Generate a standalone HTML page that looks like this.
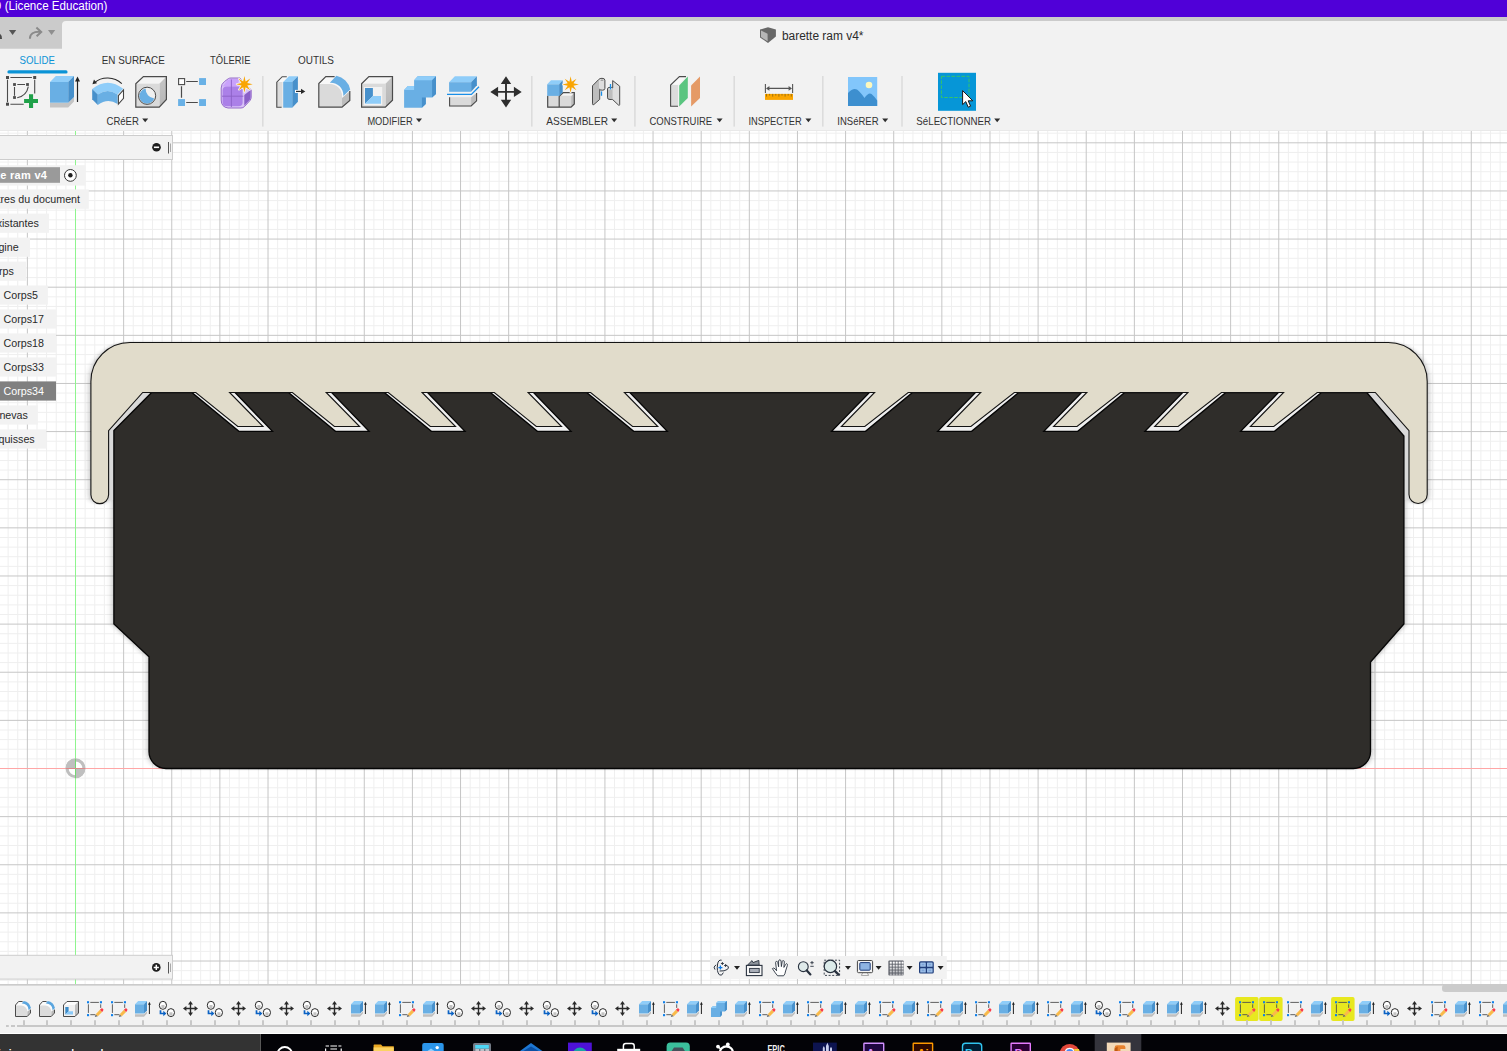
<!DOCTYPE html>
<html lang="fr">
<head>
<meta charset="utf-8">
<title>barette ram v4 - Fusion 360 (Licence Education)</title>
<style>
html,body{margin:0;padding:0;background:#f2f2f2;}
body{width:1507px;height:1051px;overflow:hidden;position:relative;font-family:"Liberation Sans",sans-serif;}
svg{position:absolute;left:0;top:0;display:block;}
text{font-family:"Liberation Sans",sans-serif;font-size:11px;fill:#2e2e2e;}
.lbl{font-size:10.6px;fill:#333;}
.tab{font-size:10.8px;fill:#333;}
.tree{font-size:10.7px;fill:#2a2a2a;}
</style>
</head>
<body>
<svg width="1507" height="1051" viewBox="0 0 1507 1051">
<defs>
<linearGradient id="gside" x1="0" y1="0" x2="0" y2="1"><stop offset="0" stop-color="#c6c6c6"/><stop offset="1" stop-color="#b6b6b6"/></linearGradient>
<!-- timeline icons, 16x16, origin top-left -->
<g id="t-fillet">
<path d="M0.5 15.5 V4 L3.6 0.5 H9 L15.5 7.5 V12 L12.2 15.5 Z" fill="#fbfbfb"/>
<path d="M0.9 15.2 V4.6 H6.4 A6.2 6.2 0 0 1 12.4 10.8 V15.2 Z" fill="#dcdcdc"/>
<path d="M12.4 15.2 V10.6 L15.2 8.6 V11.8 Z" fill="#b9b9b9"/>
<path d="M8.7 -0.1 A9.3 9.3 0 0 1 16 6.9 L13.7 9.2 A6.4 6.4 0 0 0 6.7 2.6 Z" fill="#5ba6df"/>
<path d="M7.6 0.5 H3.6 L0.5 4 V15.5 H12.2 L15.5 12 V8.6" fill="none" stroke="#4b4b4b" stroke-width="1"/>
</g>
<g id="t-shell">
<path d="M0.5 4 L4 0.5 H15.5 L12 4 Z" fill="#fdfdfd"/>
<path d="M12 4 L15.5 0.5 V12 L12 15.5 Z" fill="url(#gside)"/>
<path d="M0.5 4 H12 V15.5 H0.5 Z" fill="#f1f1f1"/>
<path d="M2.3 6 H5.6 V10.4 L2.3 13.6 Z" fill="#3c8cc9"/>
<path d="M5.6 10.2 H10 V13.6 H2.3 L5.6 10.2 Z" fill="#8ccaf8"/>
<path d="M0.5 4 L4 0.5 H15.5 V12 L12 15.5 H0.5 Z" fill="none" stroke="#4b4b4b" stroke-width="1"/>
</g>
<g id="t-sketch">
<path d="M3.3 1.4 H11.9 M1.4 3.3 V11.9 M13.7 3.3 V6.9 M3.3 13.7 H8.2" stroke="#4e4e4e" stroke-width="0.9" fill="none"/>
<rect x="0" y="0.2" width="2.1" height="2.1" fill="#0f80ea"/>
<rect x="12.9" y="0.2" width="2.1" height="2.1" fill="#0f80ea"/>
<rect x="0" y="13.1" width="2.1" height="2.1" fill="#0f80ea"/>
<path d="M7.8 16.1 L8.7 13.2 L10.8 15.3 Z" fill="#6a6a6a"/>
<path d="M8.7 13.2 L12.9 8.8 L15.1 10.9 L10.8 15.3 Z" fill="#f9ba4a"/>
<path d="M12.9 8.8 L13.8 7.9 A1.5 1.5 0 0 1 16 10 L15.1 10.9 Z" fill="#fb3d4a"/>
</g>
<g id="t-extrude">
<path d="M0 13.3 H9 L12 10.3 V12.4 L9 15.7 H0 Z" fill="#c0c0c0"/>
<path d="M0 3.3 L3.2 0 H12 L9 3.3 Z" fill="#8fcdf9"/>
<path d="M9 3.3 L12 0 V9.4 L9 12.5 Z" fill="#4790cb"/>
<rect x="0" y="3.3" width="9.05" height="9.2" fill="#69afe4"/>
<path d="M14.4 2.6 V13" stroke="#222" stroke-width="1"/>
<path d="M14.4 0.7 L13 3.8 H15.8 Z" fill="#222"/>
</g>
<g id="t-copy">
<ellipse cx="3.9" cy="4.3" rx="3.6" ry="4" fill="#fff" stroke="#262626" stroke-width="1"/>
<rect x="2.4" y="4" width="3.1" height="3.3" fill="#c2c2c2"/>
<ellipse cx="11.9" cy="11.6" rx="3.6" ry="4" fill="#fff" stroke="#262626" stroke-width="1"/>
<rect x="10.4" y="11.3" width="3.1" height="3.3" fill="#c2c2c2"/>
<path d="M1.5 9.2 V12.5 H5" fill="none" stroke="#0b62c4" stroke-width="1.7"/>
<path d="M4.3 9.8 L7.4 12.5 L4.3 15.2 Z" fill="#0b62c4"/>
</g>
<g id="t-move">
<path d="M7.5 0 L10 3.4 H8.2 V6.8 H11.6 V5 L15 7.5 L11.6 10 V8.2 H8.2 V11.6 H10 L7.5 15 L5 11.6 H6.8 V8.2 H3.4 V10 L0 7.5 L3.4 5 V6.8 H6.8 V3.4 H5 Z" fill="#2a2a2a"/>
</g>
<g id="t-combine">
<path d="M0 6.9 L1.8 5.2 H5.2 V1.9 L7.2 0 H16 V8.6 L13.8 10.6 H10.9 V14 L9.1 15.9 H0 Z" fill="#69afe4"/>
<path d="M5.2 1.9 L7.2 0 H16 L13.8 1.9 Z M0 6.9 L1.8 5.2 H5.2 V6.9 Z" fill="#8fcdf9"/>
<path d="M13.8 1.9 L16 0 V8.6 L13.8 10.6 Z M9.1 10.6 H10.9 V14 L9.1 15.9 Z" fill="#4790cb"/>
</g>
</defs>

<!-- ======= window chrome ======= -->
<rect x="0" y="0" width="1507" height="17" fill="#5000d8"/>
<rect x="0" y="17" width="1507" height="4" fill="#cbcbcb"/>
<rect x="0" y="21" width="1507" height="110" fill="#f2f2f2"/>
<rect x="0" y="130" width="1507" height="1" fill="#e4e4e4"/>
<path d="M0 17 H1507 V21 H66 A4 4 0 0 0 62 25 V48.7 H0 Z" fill="#cbcbcb"/>
<text x="-5.4" y="9.8" style="font-size:12px;fill:#fff">0</text><text x="4.7" y="9.8" style="font-size:12px;fill:#fff" textLength="102.7" lengthAdjust="spacingAndGlyphs">(Licence Education)</text>

<!-- ======= canvas ======= -->
<rect x="0" y="130.8" width="1507" height="854.2" fill="#fff"/>
<path d="M8.12 131 V984 M17.74 131 V984 M37.00 131 V984 M46.62 131 V984 M56.25 131 V984 M65.87 131 V984 M85.13 131 V984 M94.75 131 V984 M104.38 131 V984 M114.00 131 V984 M133.26 131 V984 M142.88 131 V984 M152.51 131 V984 M162.13 131 V984 M181.39 131 V984 M191.01 131 V984 M200.64 131 V984 M210.26 131 V984 M229.52 131 V984 M239.14 131 V984 M248.77 131 V984 M258.39 131 V984 M277.65 131 V984 M287.27 131 V984 M296.90 131 V984 M306.52 131 V984 M325.78 131 V984 M335.40 131 V984 M345.03 131 V984 M354.65 131 V984 M373.91 131 V984 M383.53 131 V984 M393.16 131 V984 M402.78 131 V984 M422.04 131 V984 M431.66 131 V984 M441.29 131 V984 M450.91 131 V984 M470.17 131 V984 M479.79 131 V984 M489.42 131 V984 M499.04 131 V984 M518.30 131 V984 M527.92 131 V984 M537.55 131 V984 M547.17 131 V984 M566.43 131 V984 M576.05 131 V984 M585.68 131 V984 M595.30 131 V984 M614.56 131 V984 M624.18 131 V984 M633.81 131 V984 M643.43 131 V984 M662.69 131 V984 M672.31 131 V984 M681.94 131 V984 M691.56 131 V984 M710.82 131 V984 M720.44 131 V984 M730.07 131 V984 M739.69 131 V984 M758.95 131 V984 M768.57 131 V984 M778.20 131 V984 M787.82 131 V984 M807.08 131 V984 M816.70 131 V984 M826.33 131 V984 M835.95 131 V984 M855.21 131 V984 M864.83 131 V984 M874.46 131 V984 M884.08 131 V984 M903.34 131 V984 M912.96 131 V984 M922.59 131 V984 M932.21 131 V984 M951.47 131 V984 M961.09 131 V984 M970.72 131 V984 M980.34 131 V984 M999.60 131 V984 M1009.22 131 V984 M1018.85 131 V984 M1028.47 131 V984 M1047.73 131 V984 M1057.35 131 V984 M1066.98 131 V984 M1076.60 131 V984 M1095.86 131 V984 M1105.48 131 V984 M1115.11 131 V984 M1124.73 131 V984 M1143.99 131 V984 M1153.61 131 V984 M1163.24 131 V984 M1172.86 131 V984 M1192.12 131 V984 M1201.74 131 V984 M1211.37 131 V984 M1220.99 131 V984 M1240.25 131 V984 M1249.87 131 V984 M1259.50 131 V984 M1269.12 131 V984 M1288.38 131 V984 M1298.00 131 V984 M1307.63 131 V984 M1317.25 131 V984 M1336.51 131 V984 M1346.13 131 V984 M1355.76 131 V984 M1365.38 131 V984 M1384.64 131 V984 M1394.26 131 V984 M1403.89 131 V984 M1413.51 131 V984 M1432.77 131 V984 M1442.39 131 V984 M1452.02 131 V984 M1461.64 131 V984 M1480.90 131 V984 M1490.52 131 V984 M1500.15 131 V984 M0 133.18 H1507 M0 152.44 H1507 M0 162.06 H1507 M0 171.69 H1507 M0 181.31 H1507 M0 200.57 H1507 M0 210.19 H1507 M0 219.82 H1507 M0 229.44 H1507 M0 248.70 H1507 M0 258.32 H1507 M0 267.95 H1507 M0 277.57 H1507 M0 296.83 H1507 M0 306.45 H1507 M0 316.08 H1507 M0 325.70 H1507 M0 344.96 H1507 M0 354.58 H1507 M0 364.21 H1507 M0 373.83 H1507 M0 393.09 H1507 M0 402.71 H1507 M0 412.34 H1507 M0 421.96 H1507 M0 441.22 H1507 M0 450.84 H1507 M0 460.47 H1507 M0 470.09 H1507 M0 489.35 H1507 M0 498.97 H1507 M0 508.60 H1507 M0 518.22 H1507 M0 537.48 H1507 M0 547.10 H1507 M0 556.73 H1507 M0 566.35 H1507 M0 585.61 H1507 M0 595.23 H1507 M0 604.86 H1507 M0 614.48 H1507 M0 633.74 H1507 M0 643.36 H1507 M0 652.99 H1507 M0 662.61 H1507 M0 681.87 H1507 M0 691.49 H1507 M0 701.12 H1507 M0 710.74 H1507 M0 730.00 H1507 M0 739.62 H1507 M0 749.25 H1507 M0 758.87 H1507 M0 778.13 H1507 M0 787.75 H1507 M0 797.38 H1507 M0 807.00 H1507 M0 826.26 H1507 M0 835.88 H1507 M0 845.51 H1507 M0 855.13 H1507 M0 874.39 H1507 M0 884.01 H1507 M0 893.64 H1507 M0 903.26 H1507 M0 922.52 H1507 M0 932.14 H1507 M0 941.77 H1507 M0 951.39 H1507 M0 970.65 H1507 M0 980.27 H1507" stroke="#efefef" stroke-width="1" fill="none"/>
<path d="M27.37 131 V984 M75.50 131 V984 M123.63 131 V984 M171.76 131 V984 M219.89 131 V984 M268.02 131 V984 M316.15 131 V984 M364.28 131 V984 M412.41 131 V984 M460.54 131 V984 M508.67 131 V984 M556.80 131 V984 M604.93 131 V984 M653.06 131 V984 M701.19 131 V984 M749.32 131 V984 M797.45 131 V984 M845.58 131 V984 M893.71 131 V984 M941.84 131 V984 M989.97 131 V984 M1038.10 131 V984 M1086.23 131 V984 M1134.36 131 V984 M1182.49 131 V984 M1230.62 131 V984 M1278.75 131 V984 M1326.88 131 V984 M1375.01 131 V984 M1423.14 131 V984 M1471.27 131 V984 M0 142.81 H1507 M0 190.94 H1507 M0 239.07 H1507 M0 287.20 H1507 M0 335.33 H1507 M0 383.46 H1507 M0 431.59 H1507 M0 479.72 H1507 M0 527.85 H1507 M0 575.98 H1507 M0 624.11 H1507 M0 672.24 H1507 M0 720.37 H1507 M0 768.50 H1507 M0 816.63 H1507 M0 864.76 H1507 M0 912.89 H1507 M0 961.02 H1507" stroke="#c6c6c6" stroke-width="1" fill="none"/>
<path d="M75.5 131 V985" stroke="#8ef58e" stroke-width="1" fill="none"/>
<path d="M0 768.5 H1507" stroke="#ffa6a6" stroke-width="1" fill="none"/>

<!-- model -->
<g id="model">
<filter id="soft" x="-5%" y="-5%" width="110%" height="110%"><feGaussianBlur stdDeviation="3.8 1.2"/></filter>
<g filter="url(#soft)" opacity="0.5"><path d="M151.7 392.5 L191.8 392.5 L238.9 431.3 L272.5 431.3 L234.9 392.5 L288.4 392.5 L335.5 431.3 L369.1 431.3 L331.5 392.5 L384.3 392.5 L431.4 431.3 L465.0 431.3 L427.4 392.5 L490.3 392.5 L537.4 431.3 L571.0 431.3 L533.4 392.5 L586.6 392.5 L633.7 431.3 L667.3 431.3 L629.7 392.5 L869.5 392.5 L831.6 431.3 L865.5 431.3 L912.6 392.5 L975.6 392.5 L937.7 431.3 L971.6 431.3 L1018.7 392.5 L1081.7 392.5 L1043.8 431.3 L1077.7 431.3 L1124.8 392.5 L1182.8 392.5 L1144.9 431.3 L1178.8 431.3 L1225.9 392.5 L1278.5 392.5 L1240.6 431.3 L1274.5 431.3 L1321.6 392.5 L1366.7 392.5 L1403.9 436 V624 L1370.5 662 V751.5 A17 17 0 0 1 1353.5 768.5 H166.0 A17 17 0 0 1 149 751.5 V656.7 L113.9 624 V430.6 Z" fill="#333"/><path d="M129.9 342.5 H1388.2 A39.0 39.0 0 0 1 1427.2 381.5 V494.5 A9.10 9.10 0 0 1 1409.0 494.5 V430.7 L1375.3 392.5 L1317.2 392.5 L1273.8 426.5 L1250.4 426.5 L1283.6 392.5 L1221.5 392.5 L1178.1 426.5 L1154.7 426.5 L1187.9 392.5 L1120.4 392.5 L1077.0 426.5 L1053.6 426.5 L1086.8 392.5 L1014.3 392.5 L970.9 426.5 L947.5 426.5 L980.7 392.5 L908.2 392.5 L864.8 426.5 L841.4 426.5 L874.6 392.5 L624.4 392.5 L657.8 426.5 L632.6 426.5 L590.6 392.5 L528.1 392.5 L561.5 426.5 L536.3 426.5 L494.3 392.5 L422.1 392.5 L455.5 426.5 L430.3 426.5 L388.3 392.5 L326.2 392.5 L359.6 426.5 L334.4 426.5 L292.4 392.5 L229.6 392.5 L263.0 426.5 L237.8 426.5 L195.8 392.5 L142.7 392.5 L108.6 430.7 V494.8 A8.85 8.85 0 0 1 90.9 494.8 V381.5 A39.0 39.0 0 0 1 129.9 342.5 Z" fill="#333"/></g>
<path d="M108.5 430.7 L142.7 392.2 H152 L113.9 430.6 V500 H108.5 Z" fill="#d9d9d9"/>
<path d="M191.8 392.5 L238.9 431.3 L272.5 431.3 L234.9 392.5 Z M288.4 392.5 L335.5 431.3 L369.1 431.3 L331.5 392.5 Z M384.3 392.5 L431.4 431.3 L465.0 431.3 L427.4 392.5 Z M490.3 392.5 L537.4 431.3 L571.0 431.3 L533.4 392.5 Z M586.6 392.5 L633.7 431.3 L667.3 431.3 L629.7 392.5 Z M869.5 392.5 L831.6 431.3 L865.5 431.3 L912.6 392.5 Z M975.6 392.5 L937.7 431.3 L971.6 431.3 L1018.7 392.5 Z M1081.7 392.5 L1043.8 431.3 L1077.7 431.3 L1124.8 392.5 Z M1182.8 392.5 L1144.9 431.3 L1178.8 431.3 L1225.9 392.5 Z M1278.5 392.5 L1240.6 431.3 L1274.5 431.3 L1321.6 392.5 Z" fill="#efefef"/>
<path d="M1409.3 430.7 L1375.3 392.2 H1366.7 L1404.2 436 V500 H1409.3 Z" fill="#d9d9d9"/>
<path d="M151.7 392.5 L191.8 392.5 L238.9 431.3 L272.5 431.3 L234.9 392.5 L288.4 392.5 L335.5 431.3 L369.1 431.3 L331.5 392.5 L384.3 392.5 L431.4 431.3 L465.0 431.3 L427.4 392.5 L490.3 392.5 L537.4 431.3 L571.0 431.3 L533.4 392.5 L586.6 392.5 L633.7 431.3 L667.3 431.3 L629.7 392.5 L869.5 392.5 L831.6 431.3 L865.5 431.3 L912.6 392.5 L975.6 392.5 L937.7 431.3 L971.6 431.3 L1018.7 392.5 L1081.7 392.5 L1043.8 431.3 L1077.7 431.3 L1124.8 392.5 L1182.8 392.5 L1144.9 431.3 L1178.8 431.3 L1225.9 392.5 L1278.5 392.5 L1240.6 431.3 L1274.5 431.3 L1321.6 392.5 L1366.7 392.5 L1403.9 436 V624 L1370.5 662 V751.5 A17 17 0 0 1 1353.5 768.5 H166.0 A17 17 0 0 1 149 751.5 V656.7 L113.9 624 V430.6 Z" fill="#2f2d2a" stroke="#050505" stroke-width="1.3"/>
<path d="M129.9 342.5 H1388.2 A39.0 39.0 0 0 1 1427.2 381.5 V494.5 A9.10 9.10 0 0 1 1409.0 494.5 V430.7 L1375.3 392.5 L1317.2 392.5 L1273.8 426.5 L1250.4 426.5 L1283.6 392.5 L1221.5 392.5 L1178.1 426.5 L1154.7 426.5 L1187.9 392.5 L1120.4 392.5 L1077.0 426.5 L1053.6 426.5 L1086.8 392.5 L1014.3 392.5 L970.9 426.5 L947.5 426.5 L980.7 392.5 L908.2 392.5 L864.8 426.5 L841.4 426.5 L874.6 392.5 L624.4 392.5 L657.8 426.5 L632.6 426.5 L590.6 392.5 L528.1 392.5 L561.5 426.5 L536.3 426.5 L494.3 392.5 L422.1 392.5 L455.5 426.5 L430.3 426.5 L388.3 392.5 L326.2 392.5 L359.6 426.5 L334.4 426.5 L292.4 392.5 L229.6 392.5 L263.0 426.5 L237.8 426.5 L195.8 392.5 L142.7 392.5 L108.6 430.7 V494.8 A8.85 8.85 0 0 1 90.9 494.8 V381.5 A39.0 39.0 0 0 1 129.9 342.5 Z" fill="#e1dccb" stroke="#141414" stroke-width="1.1"/>
</g>

<!-- origin -->
<g>
<circle cx="75.5" cy="768.3" r="8.4" fill="none" stroke="#bfbfbf" stroke-width="3.1"/>
<path d="M75.5 768.5 V758.7 A9.8 9.8 0 0 0 65.7 768.5 Z M75.5 768.5 V778.3 A9.8 9.8 0 0 0 85.3 768.5 Z" fill="#bfbfbf"/>
<path d="M75.5 758.7 V778.3" stroke="#72d672" stroke-width="1"/>
<path d="M65.7 768.5 H85.3" stroke="#d98a8a" stroke-width="1"/>
</g>

<!-- ======= browser panel ======= -->
<g id="browser">
<rect x="-1" y="135.5" width="173.5" height="24" fill="#f2f2f2" stroke="#cdcdcd" stroke-width="1"/>
<circle cx="156.5" cy="147.3" r="4.3" fill="#1e1e1e"/><rect x="153.9" y="146.5" width="5.2" height="1.6" fill="#fff"/>
<path d="M168.5 142 V153.5" stroke="#555" stroke-width="1"/><path d="M170.5 143.5 V152" stroke="#aaa" stroke-width="1"/>
<rect x="0" y="165.2" width="85.6" height="20.4" fill="#f2f2f2"/>
<rect x="0" y="167.2" width="60" height="15.6" fill="#9a9a9a"/>
<text x="-32.2" y="179.2" style="font-size:11px;font-weight:bold;fill:#fff" textLength="79.2" lengthAdjust="spacing">barette ram v4</text>
<circle cx="70.4" cy="175.4" r="5.9" fill="#fff" stroke="#2a2a2a" stroke-width="0.95"/><circle cx="70.4" cy="175.3" r="2.2" fill="#1e1e1e"/>
<rect x="0" y="189.4" width="88.8" height="19.4" fill="#f2f2f2"/>
<text class="tree" x="80.0" y="203.1" text-anchor="end" style="fill:#2a2a2a">Paramètres du document</text>
<rect x="0" y="213.6" width="49.0" height="19.2" fill="#f2f2f2"/>
<text class="tree" x="38.8" y="227.0" text-anchor="end" style="fill:#2a2a2a">Vues existantes</text>
<rect x="0" y="237.6" width="30.0" height="19.2" fill="#f2f2f2"/>
<text class="tree" x="18.6" y="251.0" text-anchor="end" style="fill:#2a2a2a">Origine</text>
<rect x="0" y="261.6" width="26.0" height="19.2" fill="#f2f2f2"/>
<text class="tree" x="13.9" y="275.0" text-anchor="end" style="fill:#2a2a2a">Corps</text>
<rect x="0" y="285.5" width="47.9" height="19.2" fill="#f2f2f2"/>
<text class="tree" x="3.6" y="298.9" style="fill:#2a2a2a">Corps5</text>
<rect x="0" y="309.4" width="56.0" height="19.2" fill="#f2f2f2"/>
<text class="tree" x="3.6" y="322.8" style="fill:#2a2a2a">Corps17</text>
<rect x="0" y="333.4" width="56.0" height="19.2" fill="#f2f2f2"/>
<text class="tree" x="3.6" y="346.8" style="fill:#2a2a2a">Corps18</text>
<rect x="0" y="357.4" width="56.0" height="19.2" fill="#f2f2f2"/>
<text class="tree" x="3.6" y="370.8" style="fill:#2a2a2a">Corps33</text>
<rect x="0" y="381.4" width="56.0" height="19.2" fill="#808080"/>
<text class="tree" x="3.6" y="394.8" style="fill:#fff">Corps34</text>
<rect x="0" y="405.4" width="37.9" height="19.2" fill="#f2f2f2"/>
<text class="tree" x="27.9" y="418.8" text-anchor="end" style="fill:#2a2a2a">Canevas</text>
<rect x="0" y="429.4" width="46.4" height="19.2" fill="#f2f2f2"/>
<text class="tree" x="34.7" y="442.8" text-anchor="end" style="fill:#2a2a2a">Esquisses</text>
<rect x="-1" y="955.3" width="173.5" height="23.8" fill="#f2f2f2" stroke="#cdcdcd" stroke-width="1"/>
<circle cx="156.3" cy="967.4" r="4.3" fill="#1e1e1e"/><path d="M153.7 967.4 H158.9 M156.3 964.8 V970" stroke="#fff" stroke-width="1.5"/>
<path d="M168.5 962 V973.5" stroke="#555" stroke-width="1"/><path d="M170.5 963.5 V972" stroke="#aaa" stroke-width="1"/>
</g>

<!-- ======= nav bar ======= -->
<g id="navbar">
<rect x="710.2" y="956" width="236.6" height="23" fill="#f2f2f2"/>
<g fill="none" stroke="#2a3340" stroke-width="1">
<path d="M716 964.8 Q712.6 967 715 969.6 M726 965.2 Q730 966.6 727.4 969.4 Q724.6 971.4 719.6 971"/>
<path d="M721.6 960.2 Q718.4 959.4 717.6 964 Q716.4 971.6 719.4 974.8 Q721.6 976.6 723.4 972.6"/>
<path d="M722.4 962 v3 m-1.5 -1.5 h3 M725.6 964 v3 m-1.5 -1.5 h3" stroke-width="0.9"/>
</g>
<path d="M720.4 965.6 v4 m-2 -2 h4" stroke="#0a78e6" stroke-width="1.3" fill="none"/>
<path d="M734.0 966 h6 l-3 3.7 Z" fill="#222"/>
<path d="M747.4 965.2 L752 960.6 L753 962.6 L758.8 960.4 L759.2 965.2 Z" fill="#8e949c" stroke="#2a3340" stroke-width="0.9"/>
<rect x="746.4" y="965.4" width="15.6" height="10.2" fill="#f6f6f6" stroke="#2a3340" stroke-width="1.1"/>
<rect x="749.6" y="968.4" width="9.6" height="4.2" fill="#a9aeb8" stroke="#2a3340" stroke-width="0.9"/>
<path d="M772.4 968.6 Q773.6 967.4 775 968.8 L776.6 970.8 L775.6 962.6 Q775.6 961.4 776.6 961.4 Q777.6 961.4 777.8 962.6 L778.6 966.8 L778.6 961 Q778.8 959.8 779.8 959.8 Q780.8 959.8 781 961 L781.4 966.6 L782.2 961.6 Q782.4 960.4 783.4 960.6 Q784.4 960.8 784.3 962 L783.9 967.4 L785.6 964.4 Q786.2 963.4 787 963.8 Q787.8 964.4 787.4 965.4 L785.6 971 Q785.2 974.2 783.6 975.8 H777.6 Q775.6 973.6 772.4 968.6 Z" fill="#fff" stroke="#2a3340" stroke-width="0.9"/>
<circle cx="803.3" cy="966.7" r="4.9" fill="#dfeaea" stroke="#2a3340" stroke-width="1.1"/>
<path d="M806.8 970.4 L810.4 974.4" stroke="#2a3340" stroke-width="2.2" stroke-linecap="round"/>
<path d="M812 961 v3.4 m-1.7 -1.7 h3.4 M810.3 966.3 h3.4" stroke="#2a3340" stroke-width="0.9" fill="none"/>
<rect x="824.2" y="960.2" width="15.4" height="15.2" fill="none" stroke="#2a3340" stroke-width="0.9" stroke-dasharray="2 1.6"/>
<circle cx="830.4" cy="966.4" r="6.2" fill="#dcebea" stroke="#2a3340" stroke-width="1.2"/>
<path d="M835 971.2 L838.6 974.6" stroke="#2a3340" stroke-width="2.4" stroke-linecap="round"/>
<path d="M845.0 966 h6 l-3 3.7 Z" fill="#222"/>
<rect x="857.4" y="960.5" width="15.2" height="12.2" rx="1.2" fill="#f4f4f4" stroke="#444" stroke-width="1"/>
<rect x="859.8" y="962.6" width="10.4" height="7.6" rx="0.8" fill="#8eb4e3" stroke="#1f3d7a" stroke-width="1"/>
<path d="M862.6 973 H867.4 L868.6 975.4 H861.4 Z" fill="#fff" stroke="#666" stroke-width="0.6"/>
<path d="M875.6 966 h6 l-3 3.7 Z" fill="#222"/>
<rect x="888.4" y="960.4" width="15.4" height="15.2" rx="1" fill="#5a5d66"/>
<rect x="889.7" y="961.6" width="2.1" height="2.1" fill="#fff" opacity="1.00"/>
<rect x="889.7" y="964.6" width="2.1" height="2.1" fill="#fff" opacity="0.88"/>
<rect x="889.7" y="967.5" width="2.1" height="2.1" fill="#fff" opacity="0.76"/>
<rect x="889.7" y="970.4" width="2.1" height="2.1" fill="#fff" opacity="0.64"/>
<rect x="889.7" y="973.4" width="2.1" height="2.1" fill="#fff" opacity="0.52"/>
<rect x="892.7" y="961.6" width="2.1" height="2.1" fill="#fff" opacity="1.00"/>
<rect x="892.7" y="964.6" width="2.1" height="2.1" fill="#fff" opacity="0.88"/>
<rect x="892.7" y="967.5" width="2.1" height="2.1" fill="#fff" opacity="0.76"/>
<rect x="892.7" y="970.4" width="2.1" height="2.1" fill="#fff" opacity="0.64"/>
<rect x="892.7" y="973.4" width="2.1" height="2.1" fill="#fff" opacity="0.52"/>
<rect x="895.6" y="961.6" width="2.1" height="2.1" fill="#fff" opacity="1.00"/>
<rect x="895.6" y="964.6" width="2.1" height="2.1" fill="#fff" opacity="0.88"/>
<rect x="895.6" y="967.5" width="2.1" height="2.1" fill="#fff" opacity="0.76"/>
<rect x="895.6" y="970.4" width="2.1" height="2.1" fill="#fff" opacity="0.64"/>
<rect x="895.6" y="973.4" width="2.1" height="2.1" fill="#fff" opacity="0.52"/>
<rect x="898.6" y="961.6" width="2.1" height="2.1" fill="#fff" opacity="1.00"/>
<rect x="898.6" y="964.6" width="2.1" height="2.1" fill="#fff" opacity="0.88"/>
<rect x="898.6" y="967.5" width="2.1" height="2.1" fill="#fff" opacity="0.76"/>
<rect x="898.6" y="970.4" width="2.1" height="2.1" fill="#fff" opacity="0.64"/>
<rect x="898.6" y="973.4" width="2.1" height="2.1" fill="#fff" opacity="0.52"/>
<rect x="901.5" y="961.6" width="2.1" height="2.1" fill="#fff" opacity="1.00"/>
<rect x="901.5" y="964.6" width="2.1" height="2.1" fill="#fff" opacity="0.88"/>
<rect x="901.5" y="967.5" width="2.1" height="2.1" fill="#fff" opacity="0.76"/>
<rect x="901.5" y="970.4" width="2.1" height="2.1" fill="#fff" opacity="0.64"/>
<rect x="901.5" y="973.4" width="2.1" height="2.1" fill="#fff" opacity="0.52"/>
<path d="M906.6 966 h6 l-3 3.7 Z" fill="#222"/>
<rect x="919" y="961.2" width="14.8" height="12.4" rx="1.6" fill="#1f3d7a"/>
<rect x="920.2" y="962.4" width="5.6" height="4.4" rx="0.6" fill="#9dbfe8"/>
<rect x="921.7" y="963.8" width="2.6" height="1.6" fill="#7fa5d8"/>
<rect x="927.0" y="962.4" width="5.6" height="4.4" rx="0.6" fill="#9dbfe8"/>
<rect x="928.5" y="963.8" width="2.6" height="1.6" fill="#7fa5d8"/>
<rect x="920.2" y="968.2" width="5.6" height="4.4" rx="0.6" fill="#9dbfe8"/>
<rect x="921.7" y="969.6" width="2.6" height="1.6" fill="#7fa5d8"/>
<rect x="927.0" y="968.2" width="5.6" height="4.4" rx="0.6" fill="#9dbfe8"/>
<rect x="928.5" y="969.6" width="2.6" height="1.6" fill="#7fa5d8"/>
<path d="M937.6 966 h6 l-3 3.7 Z" fill="#222"/>
</g>

<!-- ======= toolbar ======= -->
<g id="toolbar">
<path d="M-1 39 V33.2 Q2 34.2 2 39 Z" fill="#4a4a4a"/>
<path d="M9 29.9 H16.2 L12.6 35 Z" fill="#555"/>
<path d="M29.9 38.8 C30 33.6 33.5 31.6 40 31.9" fill="none" stroke="#8a8a8a" stroke-width="2"/>
<path d="M36.4 27.6 L41.2 32 L36.6 36.2" fill="none" stroke="#8a8a8a" stroke-width="2"/>
<path d="M48 29.9 H55.2 L51.6 35 Z" fill="#8f8f8f"/>
<g><path d="M768 27.2 L775.9 29.6 V36.6 L768 42.9 L760 37.5 V29.6 Z" fill="#686868"/><path d="M761 30.5 L767.6 33.7 V41.3 L761 37 Z" fill="#b6b6b6"/></g>
<text x="781.9" y="39.7" style="font-size:12px;fill:#2b2b2b" textLength="81.6" lengthAdjust="spacingAndGlyphs">barette ram v4*</text>
<text class="tab" x="19.5" y="64" style="fill:#0a93d6" textLength="35.4" lengthAdjust="spacingAndGlyphs">SOLIDE</text>
<text class="tab" x="101.8" y="64" textLength="63" lengthAdjust="spacingAndGlyphs">EN SURFACE</text>
<text class="tab" x="210.1" y="64" textLength="40.4" lengthAdjust="spacingAndGlyphs">TÔLERIE</text>
<text class="tab" x="298.1" y="64" textLength="35.9" lengthAdjust="spacingAndGlyphs">OUTILS</text>
<rect x="7.4" y="70.3" width="60.2" height="3.2" rx="1.6" fill="#0a93d6"/>
<rect x="262.0" y="76" width="1.6" height="50.6" fill="#dcdcdc"/>
<rect x="531.0" y="76" width="1.6" height="50.6" fill="#dcdcdc"/>
<rect x="634.1" y="76" width="1.6" height="50.6" fill="#dcdcdc"/>
<rect x="733.4" y="76" width="1.6" height="50.6" fill="#dcdcdc"/>
<rect x="822.0" y="76" width="1.6" height="50.6" fill="#dcdcdc"/>
<rect x="901.2" y="76" width="1.6" height="50.6" fill="#dcdcdc"/>
<text class="lbl" x="106.5" y="124.6" textLength="32.4" lengthAdjust="spacingAndGlyphs">CRéER</text>
<path d="M142.2 118.4 h6 l-3 3.9 Z" fill="#2e2e2e"/>
<text class="lbl" x="367.4" y="124.6" textLength="45.3" lengthAdjust="spacingAndGlyphs">MODIFIER</text>
<path d="M416.0 118.4 h6 l-3 3.9 Z" fill="#2e2e2e"/>
<text class="lbl" x="546.3" y="124.6" textLength="61.7" lengthAdjust="spacingAndGlyphs">ASSEMBLER</text>
<path d="M611.2 118.4 h6 l-3 3.9 Z" fill="#2e2e2e"/>
<text class="lbl" x="649.5" y="124.6" textLength="62.7" lengthAdjust="spacingAndGlyphs">CONSTRUIRE</text>
<path d="M716.6 118.4 h6 l-3 3.9 Z" fill="#2e2e2e"/>
<text class="lbl" x="748.4" y="124.6" textLength="53.3" lengthAdjust="spacingAndGlyphs">INSPECTER</text>
<path d="M805.4 118.4 h6 l-3 3.9 Z" fill="#2e2e2e"/>
<text class="lbl" x="837.3" y="124.6" textLength="41.3" lengthAdjust="spacingAndGlyphs">INSéRER</text>
<path d="M882.2 118.4 h6 l-3 3.9 Z" fill="#2e2e2e"/>
<text class="lbl" x="916.3" y="124.6" textLength="74.7" lengthAdjust="spacingAndGlyphs">SéLECTIONNER</text>
<path d="M994.2 118.4 h6 l-3 3.9 Z" fill="#2e2e2e"/>
<g id="i-sketch">
<path d="M10.4 77.5 H31.9 M7.5 79.8 V102.3 M34.7 79.8 V93.6 M10.4 104.2 H23.7" stroke="#4b4b4b" stroke-width="1.1" fill="none"/>
<rect x="6.0" y="76.0" width="3" height="3" fill="#4b4b4b"/>
<rect x="33.2" y="76.0" width="3" height="3" fill="#4b4b4b"/>
<rect x="6.0" y="102.7" width="3" height="3" fill="#4b4b4b"/>
<path d="M17.3 84.5 H25 M14.5 86.9 V95.8" stroke="#4b4b4b" stroke-width="1.1" fill="none"/>
<path d="M17.2 97.7 C23 96.6 27.2 92.6 28.3 86.6" stroke="#4b4b4b" stroke-width="1.1" fill="none"/>
<rect x="13.1" y="83.1" width="2.8" height="2.8" fill="#4b4b4b"/>
<rect x="26.1" y="83.1" width="2.8" height="2.8" fill="#4b4b4b"/>
<rect x="13.1" y="96.1" width="2.8" height="2.8" fill="#4b4b4b"/>
<path d="M29 94.2 H33.1 V99 H38 V103.1 H33.1 V107.9 H29 V103.1 H24.1 V99 H29 Z" fill="#1fa149"/>
</g>
<g id="i-extrude">
<path d="M50 102.7 H68.2 L74 97 V101.6 L68.2 107.6 H50 Z" fill="#c4c4c4"/>
<path d="M50 82 L55.8 76 H74 L68.2 82 Z" fill="#8fcdf9"/>
<path d="M68.2 82 L74 76 V97 L68.2 102.7 Z" fill="#4790cb"/>
<rect x="50" y="82" width="18.2" height="20.7" fill="#69afe4"/>
<path d="M77.5 80 V102" stroke="#222" stroke-width="1.2"/><path d="M77.5 76.6 L75 81.4 H80 Z" fill="#222"/>
</g>
<g id="i-revolve">
<path d="M121.8 83.6 C114 76.4 102 76.2 94.6 82.6" stroke="#2a2a2a" stroke-width="1.1" fill="none"/>
<path d="M92.4 84.2 L94 79.6 L97 83.2 Z" fill="#2a2a2a"/>
<path d="M92.2 89.1 Q107.7 76.6 123.2 88.8 L117.6 94.5 Q107.7 87.4 97.8 94.5 Z" fill="#8fcdf9"/>
<path d="M92.2 89.1 L97.8 94.5 V105 L92.2 99.3 Z" fill="#4790cb"/>
<path d="M97.8 94.5 Q107.7 87.4 117.6 94.5 V104 Q107.7 97.6 97.8 105 Z" fill="#69afe4"/>
<path d="M118.4 95.6 L123.5 90 V98.4 L118.4 104 Z" fill="#fff" stroke="#444" stroke-width="1.1"/>
</g>
<g id="i-hole">
<path d="M135.5 83.7 L143.2 76.3 H166.7 L159.4 83.7 Z" fill="#f4f4f4"/>
<path d="M159.4 83.7 L166.7 76.3 V99.6 L159.4 107.5 Z" fill="url(#gside)"/>
<rect x="135.5" y="83.7" width="23.9" height="23.8" fill="#dadada"/>
<circle cx="147.1" cy="95.8" r="8.6" fill="#f0f0f0"/>
<path d="M145.6 88.6 A7.6 7.6 0 1 0 154.2 98.4 A9.5 9.5 0 0 1 145.6 88.6 Z" fill="#69afe4"/>
<circle cx="147.1" cy="95.8" r="8.6" fill="none" stroke="#4b4b4b" stroke-width="1"/>
<path d="M135.8 83.7 L143.4 76.6 H166.4 V99.5 L159.2 107.2 H135.8 Z" fill="none" stroke="#4b4b4b" stroke-width="1.2"/>
</g>
<g id="i-pattern">
<rect x="178.6" y="78.6" width="6" height="6" fill="#fff" stroke="#4b4b4b" stroke-width="1.1"/>
<rect x="199.1" y="78.1" width="6.9" height="6.9" fill="#69b1e6"/>
<rect x="178.1" y="99.1" width="6.9" height="6.9" fill="#69b1e6"/>
<rect x="199.1" y="99.1" width="6.9" height="6.9" fill="#69b1e6"/>
<path d="M186.2 81.5 H197.8 M181.5 86.2 V97.8 M186.2 102.5 H197.8" stroke="#4b4b4b" stroke-width="1.2"/>
</g>
<g id="i-form">
<path d="M221.2 88 Q221.2 84 224.5 81.5 L228.5 78.5 Q229.5 78 231 78 H240 L251.2 90 V97 Q251.2 99 250 100.5 L244.5 106.5 Q243 108 241 108 H228 Q221.2 107 221.2 100 Z" fill="#d9c3f7" stroke="#8c5fc4" stroke-width="0.9"/>
<path d="M222.5 86.5 L227.5 80 Q229 79 231 79 H239.5 L236.5 86.5 Z" fill="#c9a2fb"/>
<path d="M244.3 95 L250.6 90 V97 Q250.6 99 249.6 100 L244.3 105.8 Z" fill="#8a5fc8"/>
<rect x="222.6" y="86.6" width="20" height="19.6" rx="4" fill="#ab80e8"/>
<path d="M231.4 79.5 V107 M222 96.2 H243.4" stroke="#8c62c6" stroke-width="0.9" fill="none"/>
<path d="M244.40 76.00 L245.59 81.44 L250.27 78.43 L247.26 83.11 L252.70 84.30 L247.26 85.49 L250.27 90.17 L245.59 87.16 L244.40 92.60 L243.21 87.16 L238.53 90.17 L241.54 85.49 L236.10 84.30 L241.54 83.11 L238.53 78.43 L243.21 81.44 Z" fill="#f2f2f2" stroke="#f2f2f2" stroke-width="1.6"/>
<path d="M244.40 76.00 L245.59 81.44 L250.27 78.43 L247.26 83.11 L252.70 84.30 L247.26 85.49 L250.27 90.17 L245.59 87.16 L244.40 92.60 L243.21 87.16 L238.53 90.17 L241.54 85.49 L236.10 84.30 L241.54 83.11 L238.53 78.43 L243.21 81.44 Z" fill="#f9a502"/>
</g>
<g id="i-presspull">
<path d="M276.4 82 L282 76.3 H290 L284 82 Z" fill="#f8f8f8"/>
<rect x="276.4" y="82" width="6" height="25.5" fill="#dcdcdc"/>
<path d="M281.6 107.2 H276.8 V82.2 L282.2 76.7 H286.8" fill="none" stroke="#4b4b4b" stroke-width="1.1"/>
<path d="M283.2 82 L288.9 76.3 H297.9 L292.2 82 Z" fill="#8fcdf9"/>
<path d="M292.2 82 L297.9 76.3 V101.7 L292.2 107.7 Z" fill="#4790cb"/>
<rect x="283.2" y="82" width="9" height="25.7" fill="#69afe4"/>
<rect x="295" y="89.9" width="7" height="3" fill="#fff"/>
<path d="M296 91.4 H302" stroke="#2a2a2a" stroke-width="1.2"/><path d="M301 88.7 L305.3 91.4 L301 94.1 Z" fill="#2a2a2a"/>
</g>
<g id="i-fillet">
<path d="M318.5 83.4 L325.6 76.3 H334.6 L350 89.4 V100.5 L342 107.5 H318.5 Z" fill="#f8f8f8"/>
<path d="M318.9 107.3 V83.9 H330 A12 12 0 0 1 342 96 V107.3 Z" fill="#dadada"/>
<path d="M342 98 L350 91 V100.5 L342 107.5 Z" fill="#bdbdbd"/>
<path d="M336.4 75.8 A17.5 17.5 0 0 1 350.2 89.6 L343.4 96 A12.6 12.6 0 0 0 329.8 82.7 Z" fill="#69afe4"/>
<path d="M334.6 76.6 H325.8 L318.8 83.6 V107.2 H342 L349.8 100.4 V91" fill="none" stroke="#4b4b4b" stroke-width="1.2"/>
</g>
<g id="i-shell">
<path d="M361.3 83.7 L368.7 76.3 H392.8 L385.5 83.7 Z" fill="#f5f5f5"/>
<path d="M385.5 83.7 L392.8 76.3 V100.5 L385.5 107.5 Z" fill="url(#gside)"/>
<rect x="361.3" y="83.7" width="24.2" height="23.8" fill="#dadada"/>
<rect x="364" y="87" width="18.2" height="18.2" fill="#f2f2f2"/>
<path d="M365 88 H372.9 V96 L365 103.7 Z" fill="#4790cb"/>
<path d="M365 103.7 L372.9 96 H381 V103.7 Z" fill="#8fcdf9"/>
<path d="M361.6 83.8 L368.9 76.6 H392.5 V100.3 L385.3 107.2 H361.6 Z" fill="none" stroke="#4b4b4b" stroke-width="1.2"/>
</g>
<g id="i-combine">
<path d="M404.1 90 L407.9 86.1 H414.1 V80.2 L417.7 76.2 H436 V93.9 L432.1 97.6 H425.8 V103.9 L421.9 107.8 H404.1 Z" fill="#69afe4"/>
<path d="M414.1 80.2 L417.7 76.2 H436 L432.1 80.2 Z M404.1 90 L407.9 86.1 H414.1 V90 Z" fill="#8fcdf9"/>
<path d="M432.1 80.2 L436 76.2 V93.9 L432.1 97.6 Z M421.9 97.6 H425.8 V103.9 L421.9 107.8 Z" fill="#4790cb"/>
</g>
<g id="i-split">
<path d="M449.1 82.2 L454.9 76.2 H476.9 L471.1 82.2 Z" fill="#8fcdf9"/>
<path d="M471.1 82.2 L476.9 76.2 V85.2 L471.1 91.8 Z" fill="#4790cb"/>
<rect x="449.1" y="82.2" width="22" height="9.6" fill="#69afe4"/>
<path d="M447 94.4 H471.4 L479 86.7" fill="none" stroke="#1a8fe8" stroke-width="1.3"/>
<rect x="449.1" y="97.2" width="22" height="9.2" fill="#dadada"/>
<path d="M471.1 97.2 L476.9 92.7 V101 L471.1 106.4 Z" fill="#bcbcbc"/>
<path d="M449.6 97.2 V106 H471.1 L476.6 100.8 V93" fill="none" stroke="#4b4b4b" stroke-width="1.1"/>
</g>
<g id="i-move"><path d="M506.00 76.20 L511.20 84.00 H506.95 V90.95 H513.90 V86.70 L521.70 91.90 L513.90 97.10 V92.85 H506.95 V99.80 H511.20 L506.00 107.60 L500.80 99.80 H505.05 V92.85 H498.10 V97.10 L490.30 91.90 L498.10 86.70 V90.95 H505.05 V84.00 H500.80 Z" fill="#2e2e2e"/></g>
<g id="i-newcomp">
<path d="M559.1 96.3 L562.7 92.4 H574.6 L571.1 96.3 Z" fill="#f5f5f5"/>
<path d="M571.1 96.3 L574.6 92.4 V104 L571.1 107.5 Z" fill="#bcbcbc"/>
<rect x="547.2" y="95.7" width="23.9" height="11.8" fill="#dadada"/>
<path d="M547.7 95.7 V107.1 H571 L574.3 103.9 V92.7 H563 L559.2 96.4 V107" fill="none" stroke="#4b4b4b" stroke-width="1.2"/>
<path d="M547.2 84.3 L551 80.3 H562.7 L559.1 84.3 Z" fill="#8fcdf9"/>
<path d="M559.1 84.3 L562.7 80.3 V92.4 L559.1 95.9 Z" fill="#4790cb"/>
<rect x="547.2" y="84.3" width="11.9" height="11.6" fill="#69afe4"/>
<path d="M570.60 76.20 L571.79 81.64 L576.47 78.63 L573.46 83.31 L578.90 84.50 L573.46 85.69 L576.47 90.37 L571.79 87.36 L570.60 92.80 L569.41 87.36 L564.73 90.37 L567.74 85.69 L562.30 84.50 L567.74 83.31 L564.73 78.63 L569.41 81.64 Z" fill="#f2f2f2" stroke="#f2f2f2" stroke-width="1.6"/>
<path d="M570.60 76.20 L571.79 81.64 L576.47 78.63 L573.46 83.31 L578.90 84.50 L573.46 85.69 L576.47 90.37 L571.79 87.36 L570.60 92.80 L569.41 87.36 L564.73 90.37 L567.74 85.69 L562.30 84.50 L567.74 83.31 L564.73 78.63 L569.41 81.64 Z" fill="#f9a502"/>
</g>
<g id="i-joint">
<path d="M592.5 85.8 L599.3 79 V99.4 L593.8 104.6 Q592.5 105.2 592.5 103.8 Z" fill="#bdbdbd"/>
<path d="M599.2 80 Q599.2 78.3 602 78.3 Q604.9 78.3 604.9 80.2 V88.4 Q604.9 90.2 602.4 90.2 Q599.2 90.2 599.2 88.6 Z" fill="#dedede"/>
<ellipse cx="602" cy="80.3" rx="1.6" ry="0.7" fill="#a0a0a0"/>
<path d="M592.5 85.8 L598.8 79.4 Q599.8 78.3 602 78.3 Q604.9 78.3 604.9 80.2 V88.4 Q604.9 90.2 602.4 90.2 Q599.9 90.2 599.7 89.2 V99.4 L593.8 104.6 Q592.5 105.2 592.5 103.8 Z" fill="none" stroke="#4b4b4b" stroke-width="1"/>
<path d="M601.5 91.4 V95.8" stroke="#1a8fe8" stroke-width="1.3"/>
<path d="M612.7 80.6 L619.7 86.2 V104.4 Q619.7 105.8 618.4 105 L612.7 99.6 Z" fill="#dedede"/>
<path d="M607.5 89 Q607.5 87.3 610 87.3 Q612.7 87.3 612.7 88.4 V99.5 H610 Q607.5 99.5 607.5 97.8 Z" fill="#bdbdbd"/>
<ellipse cx="610.1" cy="88.7" rx="2.2" ry="1" fill="#e6e6e6"/>
<path d="M612.7 80.6 L619.7 86.2 V104.4 Q619.7 105.8 618.4 105 L612.7 99.6 Q612.4 99.5 610 99.5 Q607.5 99.5 607.5 97.8 V89 Q607.5 87.3 610 87.3 Q612.2 87.3 612.7 87.9 Z" fill="none" stroke="#4b4b4b" stroke-width="1"/>
<path d="M610.5 84 V89.4" stroke="#1a8fe8" stroke-width="1.3"/>
</g>
<g id="i-construct">
<path d="M670.1 84.9 L679.2 76.2 H686.4 L678 84.9 Z" fill="#f8f8f8"/>
<rect x="670.1" y="84.9" width="7.9" height="21.6" fill="#dcdcdc"/>
<path d="M678 106.3 H670.6 V85.1 L679.4 76.6 H686" fill="none" stroke="#4b4b4b" stroke-width="1.1"/>
<path d="M679.2 85.4 L687.8 76.5 V97.9 L679.2 106.6 Z" fill="#5ac580"/>
<path d="M691.1 85.4 L700 76.5 V97.9 L691.1 106.6 Z" fill="#e59a66"/>
</g>
<g id="i-inspect">
<path d="M765.4 84 V93 M792.6 84 V93 M767.5 88.4 H790.5" stroke="#555" stroke-width="1.1" fill="none"/>
<path d="M766 88.4 L769.4 86 V90.8 Z M792 88.4 L788.6 86 V90.8 Z" fill="#555"/>
<rect x="765" y="93.9" width="28" height="6" fill="#faa500"/>
<path d="M766.5 93.9 V96.6 M769.6 93.9 V95.6 M772.7 93.9 V96.6 M775.8 93.9 V95.6 M778.9 93.9 V96.6 M782.0 93.9 V95.6 M785.1 93.9 V96.6 M788.2 93.9 V95.6 M791.3 93.9 V96.6" stroke="#7a5a10" stroke-width="0.7" fill="none"/>
</g>
<g id="i-insert">
<rect x="848" y="77" width="29.2" height="29" fill="#82c6fb"/>
<path d="M848 93 Q853 87.5 857 89.5 Q860.5 92 864.5 98 Q868.5 92 871.5 94 Q875 97 877.2 100.5 V106 H848 Z" fill="#3d8fcf"/>
<circle cx="869" cy="85" r="3.3" fill="#fdf8bd"/>
</g>
<g id="i-select">
<rect x="938" y="72.8" width="38" height="38" fill="#0696d7"/>
<rect x="941.4" y="76.3" width="27.6" height="21.2" fill="none" stroke="#35c46a" stroke-width="1" stroke-dasharray="3.6 1.4"/>
<path d="M962.6 90.6 V104.6 L965.8 101.6 L968.2 107.2 L970.6 106.2 L968.2 100.8 H972.8 Z" fill="#fff" stroke="#1a1a1a" stroke-width="1"/>
</g>
</g>

<!-- ======= timeline ======= -->
<rect x="0" y="984" width="1507" height="1.8" fill="#cbcbcb"/>
<rect x="0" y="985.8" width="1507" height="47.2" fill="#f2f2f2"/>
<rect x="1442" y="984.6" width="70" height="7.3" rx="3.2" fill="#cbcbcb"/>
<use href="#t-fillet" x="15" y="1001"/>
<use href="#t-fillet" x="39" y="1001"/>
<use href="#t-shell" x="63" y="1001"/>
<use href="#t-sketch" x="87" y="1001"/>
<use href="#t-sketch" x="111" y="1001"/>
<use href="#t-extrude" x="135" y="1001"/>
<use href="#t-copy" x="159" y="1001"/>
<use href="#t-move" x="183" y="1001"/>
<use href="#t-copy" x="207" y="1001"/>
<use href="#t-move" x="231" y="1001"/>
<use href="#t-copy" x="255" y="1001"/>
<use href="#t-move" x="279" y="1001"/>
<use href="#t-copy" x="303" y="1001"/>
<use href="#t-move" x="327" y="1001"/>
<use href="#t-extrude" x="351" y="1001"/>
<use href="#t-extrude" x="375" y="1001"/>
<use href="#t-sketch" x="399" y="1001"/>
<use href="#t-extrude" x="423" y="1001"/>
<use href="#t-copy" x="447" y="1001"/>
<use href="#t-move" x="471" y="1001"/>
<use href="#t-copy" x="495" y="1001"/>
<use href="#t-move" x="519" y="1001"/>
<use href="#t-copy" x="543" y="1001"/>
<use href="#t-move" x="567" y="1001"/>
<use href="#t-copy" x="591" y="1001"/>
<use href="#t-move" x="615" y="1001"/>
<use href="#t-extrude" x="639" y="1001"/>
<use href="#t-sketch" x="663" y="1001"/>
<use href="#t-extrude" x="687" y="1001"/>
<use href="#t-combine" x="711" y="1001"/>
<use href="#t-extrude" x="735" y="1001"/>
<use href="#t-sketch" x="759" y="1001"/>
<use href="#t-extrude" x="783" y="1001"/>
<use href="#t-sketch" x="807" y="1001"/>
<use href="#t-extrude" x="831" y="1001"/>
<use href="#t-extrude" x="855" y="1001"/>
<use href="#t-sketch" x="879" y="1001"/>
<use href="#t-extrude" x="903" y="1001"/>
<use href="#t-sketch" x="927" y="1001"/>
<use href="#t-extrude" x="951" y="1001"/>
<use href="#t-sketch" x="975" y="1001"/>
<use href="#t-extrude" x="999" y="1001"/>
<use href="#t-extrude" x="1023" y="1001"/>
<use href="#t-sketch" x="1047" y="1001"/>
<use href="#t-extrude" x="1071" y="1001"/>
<use href="#t-copy" x="1095" y="1001"/>
<use href="#t-sketch" x="1119" y="1001"/>
<use href="#t-extrude" x="1143" y="1001"/>
<use href="#t-extrude" x="1167" y="1001"/>
<use href="#t-extrude" x="1191" y="1001"/>
<use href="#t-move" x="1215" y="1001"/>
<rect x="1235.1" y="996.9" width="23.5" height="24" rx="2" fill="#e8e81f"/>
<use href="#t-sketch" x="1239" y="1001"/>
<rect x="1259.1" y="996.9" width="23.5" height="24" rx="2" fill="#e8e81f"/>
<use href="#t-sketch" x="1263" y="1001"/>
<use href="#t-sketch" x="1287" y="1001"/>
<use href="#t-extrude" x="1311" y="1001"/>
<rect x="1331.1" y="996.9" width="23.5" height="24" rx="2" fill="#e8e81f"/>
<use href="#t-sketch" x="1335" y="1001"/>
<use href="#t-extrude" x="1359" y="1001"/>
<use href="#t-copy" x="1383" y="1001"/>
<use href="#t-move" x="1407" y="1001"/>
<use href="#t-sketch" x="1431" y="1001"/>
<use href="#t-extrude" x="1455" y="1001"/>
<use href="#t-sketch" x="1479" y="1001"/>
<use href="#t-extrude" x="1503" y="1001"/>
<path d="M24 1020.3 V1026 M47 1020.3 V1026 M71 1020.3 V1026 M95 1020.3 V1026 M119 1020.3 V1026 M143 1020.3 V1026 M167 1020.3 V1026 M191 1020.3 V1026 M215 1020.3 V1026 M239 1020.3 V1026 M263 1020.3 V1026 M287 1020.3 V1026 M311 1020.3 V1026 M335 1020.3 V1026 M359 1020.3 V1026 M383 1020.3 V1026 M407 1020.3 V1026 M431 1020.3 V1026 M455 1020.3 V1026 M479 1020.3 V1026 M503 1020.3 V1026 M527 1020.3 V1026 M551 1020.3 V1026 M575 1020.3 V1026 M599 1020.3 V1026 M623 1020.3 V1026 M647 1020.3 V1026 M671 1020.3 V1026 M695 1020.3 V1026 M719 1020.3 V1026 M743 1020.3 V1026 M767 1020.3 V1026 M791 1020.3 V1026 M815 1020.3 V1026 M839 1020.3 V1026 M863 1020.3 V1026 M887 1020.3 V1026 M911 1020.3 V1026 M935 1020.3 V1026 M959 1020.3 V1026 M983 1020.3 V1026 M1007 1020.3 V1026 M1031 1020.3 V1026 M1055 1020.3 V1026 M1079 1020.3 V1026 M1103 1020.3 V1026 M1127 1020.3 V1026 M1151 1020.3 V1026 M1175 1020.3 V1026 M1199 1020.3 V1026 M1223 1020.3 V1026 M1247 1020.3 V1026 M1271 1020.3 V1026 M1295 1020.3 V1026 M1319 1020.3 V1026 M1343 1020.3 V1026 M1367 1020.3 V1026 M1391 1020.3 V1026 M1415 1020.3 V1026 M1439 1020.3 V1026 M1463 1020.3 V1026 M1487 1020.3 V1026 M1511 1020.3 V1026" stroke="#c8c8c8" stroke-width="2" fill="none"/>
<path d="M17 1026 H1507" stroke="#c8c8c8" stroke-width="1.8" fill="none"/>
<path d="M6 1026 H8.8 M11 1026 H15" stroke="#c8c8c8" stroke-width="1.8" fill="none"/>

<!-- ======= taskbar ======= -->
<g id="taskbar">
<rect x="0" y="1033" width="1507" height="1" fill="#fff"/>
<rect x="0" y="1034" width="1507" height="17" fill="#030307"/>
<rect x="0" y="1034" width="260" height="17" fill="#333333"/><rect x="260" y="1034" width="1" height="17" fill="#585858"/>
<text x="-44" y="1060.4" style="font-size:15px;fill:#fff">Taper ici pour rechercher</text>
<circle cx="284.8" cy="1054.2" r="7.2" fill="none" stroke="#fff" stroke-width="2"/>
<path d="M325.6 1046 H329 M330.4 1046 H337 M338.4 1046 H341.4" stroke="#fff" stroke-width="1.2"/><path d="M330.4 1049 H337 M325.6 1048.6 V1051 M341.2 1048.6 V1051" stroke="#fff" stroke-width="1.2"/>
<path d="M373.6 1045 Q373.6 1044.4 374.4 1044.4 H381 L382.6 1046.2 H393.8 V1052 H373.6 Z" fill="#e9a823"/><path d="M373.6 1047.4 H393.8 V1052 H373.6 Z" fill="#fbd362"/>
<path d="M422.2 1045 Q422.2 1043 424.2 1043 H441.7 Q443.7 1043 443.7 1045 V1052 H422.2 Z" fill="#2b95e9"/><circle cx="437.2" cy="1047.6" r="1.7" fill="#fff"/><path d="M426 1052 L431 1048.6 L436 1052 Z" fill="#8fd0ff"/>
<path d="M473 1044.6 Q473 1043 474.6 1043 H489.4 Q491 1043 491 1044.6 V1052 H473 Z" fill="#737b86"/><rect x="475.2" y="1045" width="13.6" height="3.6" fill="#4ed7f6"/><path d="M475.4 1050 H479 M480.4 1050 H484 M485.4 1050 H489" stroke="#d6dadf" stroke-width="1.4"/>
<path d="M519.3 1051.5 L531 1043 L543.1 1051.5 Z" fill="#1d77d3"/><path d="M521.6 1052 L531 1046.6 L540.6 1052 Z" fill="#0a4fa3"/>
<rect x="568" y="1042.6" width="23.8" height="10" fill="#4e12d6"/><circle cx="580" cy="1055" r="7.4" fill="#1aa3a3"/>
<path d="M623.4 1051 V1046 Q623.4 1043.6 625.8 1043.6 H631.8 Q634.2 1043.6 634.2 1046 V1051" fill="none" stroke="#fff" stroke-width="1.5"/><rect x="617.2" y="1048.8" width="23" height="4" fill="#fff"/>
<path d="M666.6 1046.4 Q666.6 1042.6 670.4 1042.6 H686 Q689.8 1042.6 689.8 1046.4 V1052 H666.6 Z" fill="#3bbf9c"/><path d="M671 1052 L674 1047.4 H682.6 L685.6 1052 Z" fill="#45505a"/>
<circle cx="726.4" cy="1053" r="6.6" fill="none" stroke="#fff" stroke-width="2.2"/><circle cx="718" cy="1046.6" r="1.9" fill="#fff"/><circle cx="727.8" cy="1044.4" r="1.9" fill="#fff"/><path d="M718.6 1047.4 L721.4 1049.4 M727.6 1045 L727 1047.4" stroke="#fff" stroke-width="1.4"/>
<text x="767.4" y="1053" style="font-size:10.5px;font-weight:bold;fill:#f2f2f2" textLength="17.4" lengthAdjust="spacingAndGlyphs">EPIC</text>
<rect x="813" y="1042.6" width="23.8" height="10" fill="#0d1450"/><path d="M826 1052 V1046 L827.4 1042.8 L828.8 1046 V1052 Z M822.8 1052 V1048 L823.8 1046 L824.8 1048 V1052 Z M830 1052 V1048.6 L831 1046.8 L832 1048.6 V1052 Z" fill="#c9cfee"/>
<rect x="863.9" y="1043.2" width="19.8" height="12" rx="0.5" fill="#1f0740" stroke="#d291ff" stroke-width="1.4"/>
<text x="873.8" y="1057.4" text-anchor="middle" style="font-size:11.5px;font-weight:bold;fill:#d291ff">Ae</text>
<rect x="913.2" y="1043.2" width="19.4" height="12" rx="0.5" fill="#2e0a00" stroke="#ff9a00" stroke-width="1.4"/>
<text x="922.9" y="1057.4" text-anchor="middle" style="font-size:11.5px;font-weight:bold;fill:#ff9a00">Ai</text>
<rect x="962.5" y="1043.2" width="19.2" height="12" rx="3.0" fill="#001d33" stroke="#31c5f0" stroke-width="1.4"/>
<text x="972.1" y="1057.4" text-anchor="middle" style="font-size:11.5px;font-weight:bold;fill:#31c5f0">Ps</text>
<rect x="1011.1" y="1043.2" width="19.2" height="12" rx="0.5" fill="#2a0033" stroke="#e77bff" stroke-width="1.4"/>
<text x="1020.7" y="1057.4" text-anchor="middle" style="font-size:11.5px;font-weight:bold;fill:#e77bff">Pr</text>
<path d="M1059.6 1052 A10.4 10.4 0 0 1 1079.8 1052 Z" fill="#e2483b"/><path d="M1064.6 1052 A5.2 5.2 0 0 1 1074.8 1052 Z" fill="#fff"/><path d="M1065.8 1052 A4 4 0 0 1 1073.6 1052 Z" fill="#4a8af4"/><path d="M1074 1049 H1079 L1079.8 1052 H1075 Z" fill="#f7c933"/>
<rect x="1094.7" y="1034" width="46.6" height="17" fill="#34343c"/>
<rect x="1106.8" y="1042.6" width="23.8" height="10" fill="#f3d9b8"/><path d="M1114.6 1052 V1047.6 Q1114.6 1045.2 1117 1045.2 H1123.4 Q1125.4 1045.2 1125.4 1047.2 V1049 H1120.4 V1052 Z" fill="#e8822e"/><path d="M1114.6 1052 V1048.6 L1117.6 1046.4 V1052 Z" fill="#c05a12"/>
</g>
</svg>
</body>
</html>
